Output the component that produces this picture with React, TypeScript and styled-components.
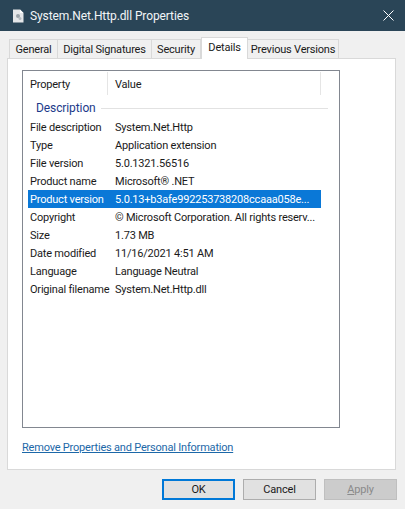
import React from 'react';
import styled, { createGlobalStyle } from 'styled-components';

interface Row {
  name: string
  value: string
  selected?: boolean
}

const rows: Row[] = [
  { name: 'File description', value: 'System.Net.Http' },
  { name: 'Type', value: 'Application extension' },
  { name: 'File version', value: '5.0.1321.56516' },
  { name: 'Product name', value: 'Microsoft® .NET' },
  { name: 'Product version', value: '5.0.13+b3afe992253738208ccaaa058e...', selected: true },
  { name: 'Copyright', value: '© Microsoft Corporation. All rights reserv...' },
  { name: 'Size', value: '1.73 MB' },
  { name: 'Date modified', value: '11/16/2021 4:51 AM' },
  { name: 'Language', value: 'Language Neutral' },
  { name: 'Original filename', value: 'System.Net.Http.dll' },
];

const tabs = [
  { label: 'General', width: 49 },
  { label: 'Digital Signatures', width: 94 },
  { label: 'Security', width: 49 },
  { label: 'Details', width: 47, active: true },
  { label: 'Previous Versions', width: 91 },
];

const App: React.FC = () => (
  <>
    <GlobalStyle />
    <Window>
      <TitleBar>
        <FileIcon width="12" height="14" viewBox="0 0 12 14">
          <path d="M1 0.5h7l3.5 3.5v9.5h-10.500z" fill="#e4e6e8" />
          <path d="M8 0.5v3.500h3.500z" fill="#fff" />
          <circle cx="6" cy="7" r="2" fill="#9aa2a8" />
          <circle cx="8" cy="9.500" r="1.500" fill="#b5bbc0" />
        </FileIcon>
        <Title>System.Net.Http.dll Properties</Title>
        <CloseIcon width="11" height="11" viewBox="0 0 11 11">
          <path d="M0.500 0.500l10 10M10.500 0.500l-10 10" stroke="#fff" strokeWidth="1" fill="none" />
        </CloseIcon>
      </TitleBar>
      <Body>
        <TabStrip>
          {tabs.map((tab) => (
            <Tab key={tab.label} $active={tab.active} $width={tab.width}>{tab.label}</Tab>
          ))}
        </TabStrip>
        <Panel>
          <ListBox>
            <HeaderRow>
              <HeaderCell $width={80} $pad={2}>Property</HeaderCell>
              <HeaderCell $width={213} $pad={7}>Value</HeaderCell>
            </HeaderRow>
            <GroupRow>
              <GroupLabel>Description</GroupLabel>
              <GroupLine />
            </GroupRow>
            {rows.map((row) => (
              <ItemRow key={row.name} $selected={row.selected}>
                <NameCell>{row.name}</NameCell>
                <ValueCell>{row.value}</ValueCell>
              </ItemRow>
            ))}
          </ListBox>
          <RemoveLink>Remove Properties and Personal Information</RemoveLink>
        </Panel>
        <ButtonRow>
          <DialogButton $variant="default">OK</DialogButton>
          <DialogButton>Cancel</DialogButton>
          <DialogButton $variant="disabled"><u>A</u>pply</DialogButton>
        </ButtonRow>
      </Body>
    </Window>
  </>
);

const GlobalStyle = createGlobalStyle`
  html, body {
    margin: 0;
    padding: 0;
    background: #f0f0f0;
  }
  body {
    font-family: Roboto, "Liberation Sans", sans-serif;
    font-size: 11px;
    letter-spacing: -0.2px;
    color: #1a1a1a;
  }
`;

const Window = styled.div`
  width: 405px;
  height: 509px;
  overflow: hidden;
  display: flex;
  flex-direction: column;
`;

const TitleBar = styled.div`
  height: 31px;
  flex: none;
  background: #2a4557;
  color: #f2f5f7;
  display: flex;
  align-items: center;
  padding: 0 11px 0 12px;
`;

const FileIcon = styled.svg`
  flex: none;
  margin-right: 6px;
`;

const Title = styled.span`
  flex: 1;
  font-size: 12px;
  letter-spacing: -0.1px;
`;

const CloseIcon = styled.svg`
  flex: none;
`;

const Body = styled.div`
  flex: 1;
  display: flex;
  flex-direction: column;
  padding: 7px 8px 0 7px;
`;

const TabStrip = styled.div`
  display: flex;
  align-items: flex-end;
  height: 21px;
  padding-left: 2px;
  position: relative;
  z-index: 1;
  margin-bottom: -1px;
`;

const Tab = styled.div<{ $active?: boolean; $width: number }>`
  box-sizing: border-box;
  width: ${(p) => p.$width}px;
  height: ${(p) => (p.$active ? 22 : 20)}px;
  background: ${(p) => (p.$active ? '#fff' : '#f0f0f0')};
  border: 1px solid #d9d9d9;
  border-bottom: ${(p) => (p.$active ? 'none' : '1px solid #d9d9d9')};
  border-left: ${(p) => (p.$active ? '1px solid #d9d9d9' : 'none')};
  display: flex;
  align-items: center;
  justify-content: center;
  white-space: nowrap;
  padding-bottom: ${(p) => (p.$active ? 3 : 0)}px;

  &:first-child {
    border-left: 1px solid #d9d9d9;
  }
`;

const Panel = styled.div`
  box-sizing: border-box;
  width: 389px;
  height: 412px;
  background: #fff;
  border: 1px solid #d9d9d9;
  padding: 11px 14px 0;
`;

const ListBox = styled.div`
  box-sizing: border-box;
  width: 318px;
  height: 358px;
  border: 1px solid #828790;
  padding-left: 5px;
`;

const HeaderRow = styled.div`
  display: flex;
  height: 25px;
  padding-top: 1px;
`;

const HeaderCell = styled.div<{ $width: number; $pad: number }>`
  box-sizing: border-box;
  width: ${(p) => p.$width}px;
  height: 23px;
  padding-left: ${(p) => p.$pad}px;
  line-height: 25px;
  border-right: 1px solid #e5e5e5;
`;

const GroupRow = styled.div`
  box-sizing: border-box;
  display: flex;
  align-items: center;
  height: 21px;
  padding: 1px 0 0 8px;
  width: 300px;
`;

const GroupLabel = styled.span`
  color: #1c3a8a;
  font-size: 12px;
  letter-spacing: -0.1px;
  margin-right: 5px;
`;

const GroupLine = styled.div`
  flex: 1;
  height: 1px;
  background: #e2e2e2;
`;

const ItemRow = styled.div<{ $selected?: boolean }>`
  display: flex;
  align-items: center;
  width: 293px;
  height: 18px;
  padding-top: 1px;
  box-sizing: border-box;
  background: ${(p) => (p.$selected ? '#0a78d7' : 'transparent')};
  color: ${(p) => (p.$selected ? '#fff' : 'inherit')};
`;

const NameCell = styled.div`
  width: 87px;
  flex: none;
  padding-left: 2px;
  box-sizing: border-box;
  white-space: nowrap;
`;

const ValueCell = styled.div`
  white-space: nowrap;
`;

const RemoveLink = styled.a`
  display: block;
  margin-top: 13px;
  color: #1c68a8;
  text-decoration: underline;
`;

const ButtonRow = styled.div`
  display: flex;
  justify-content: flex-end;
  gap: 8px;
  margin-top: 9px;
`;

const DialogButton = styled.button<{ $variant?: 'default' | 'disabled' }>`
  box-sizing: border-box;
  width: 73px;
  height: 21px;
  padding: 0;
  font: inherit;
  letter-spacing: inherit;
  color: ${(p) => (p.$variant === 'disabled' ? '#8a8a8a' : '#1a1a1a')};
  background: ${(p) => (p.$variant === 'disabled' ? '#cccccc' : '#e1e1e1')};
  border: ${(p) => (p.$variant === 'default' ? '2px solid #0078d7' : p.$variant === 'disabled' ? '1px solid #bfbfbf' : '1px solid #adadad')};
`;

export default App;
